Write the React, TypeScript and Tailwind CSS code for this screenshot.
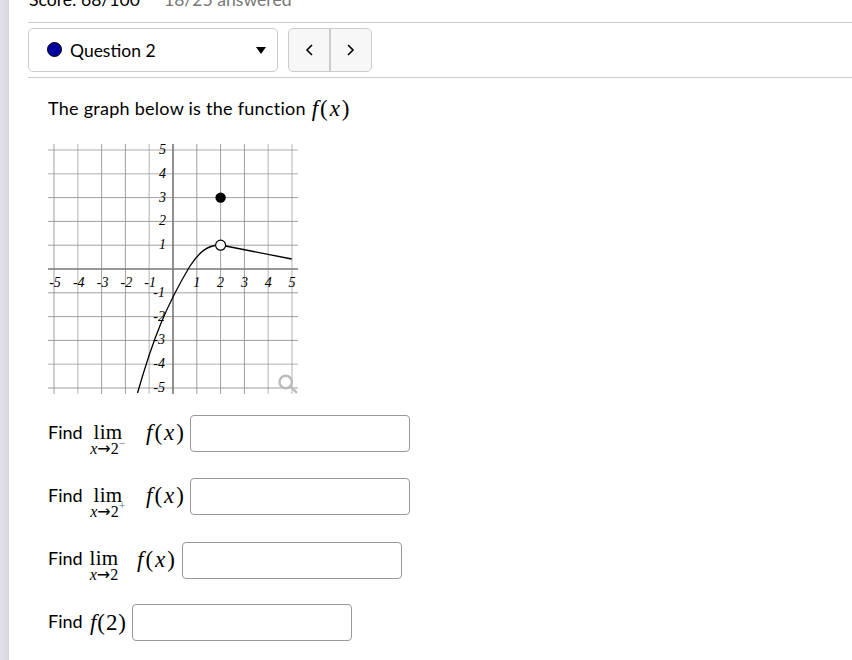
const X = (k: number) => 125 + 23.8 * k
const Y = (k: number) => 125 - 23.8 * k
const ticks = [-5, -4, -3, -2, -1, 1, 2, 3, 4, 5]
const strongV = [-4, 4, 5, -1]
const strongH = [4, -4, 5]

const Graph = () => (
    <svg width="250" height="250" viewBox="0 0 250 250" className="block">
        {ticks.map((k) => (
            <g key={k}>
                <line x1={X(k)} y1="0" x2={X(k)} y2="250" stroke="#888" strokeOpacity={strongV.includes(k) ? 0.45 : 0.8} strokeWidth={strongV.includes(k) ? 1.4 : 1} />
                <line x1="0" y1={Y(k)} x2="250" y2={Y(k)} stroke="#888" strokeOpacity={strongH.includes(k) ? 0.45 : 0.8} strokeWidth={strongH.includes(k) ? 1.4 : 1} />
            </g>
        ))}
        <line x1="125" y1="0" x2="125" y2="250" stroke="#777" strokeWidth="1.6" />
        <line x1="0" y1="125" x2="250" y2="125" stroke="#777" strokeWidth="1.6" />
        <g fontFamily="'Liberation Serif', serif" fontStyle="italic" fontSize="14" fill="#000">
            {ticks.map((k) => (
                <text key={k} x={k < 0 ? X(k) + 1 : X(k)} y="143" textAnchor="middle">{k}</text>
            ))}
            {ticks.map((k) => (
                <text key={k} x={k > 0 ? 118 : 117} y={Y(k) + 4} textAnchor="end">{k}</text>
            ))}
        </g>
        <path d="M89.5 249 C105 195 118 162 142 122 C152 107 160 101 172.5 101 L243.7 115" fill="none" stroke="#000" strokeWidth="1.3" />
        <circle cx="172.6" cy="53.6" r="5.2" fill="#000" />
        <circle cx="172.6" cy="101.2" r="5" fill="#fff" stroke="#000" strokeWidth="1.2" />
        <g fill="none" stroke="#bbb" strokeWidth="2.4">
            <circle cx="237.7" cy="238" r="6.2" />
            <line x1="242.5" y1="242.5" x2="249" y2="249" />
        </g>
    </svg>
)

const Fx = () => (
    <span className="inline-flex w-[38px] justify-between font-['Liberation_Serif'] text-[23px] leading-none">
        <i>f</i><span>(</span><i>x</i><span>)</span>
    </span>
)

const Lim = ({ sub, sup }: { sub: string; sup?: string }) => (
    <span className="relative inline-flex flex-col items-center font-['Liberation_Serif'] text-black">
        <span className="text-[21px] leading-[20px] tracking-[0.4px]">lim</span>
        <span className={sup ? "relative -ml-[7px] text-[16px] leading-[14px] whitespace-nowrap" : "text-[16px] leading-[14px] whitespace-nowrap"}>
            <i>x</i><span className="font-['DejaVu_Sans'] text-[16px]">→</span>{sub}
            {sup && <span className="absolute left-full top-[-5px] text-[12px] text-gray-500 leading-none">{sup}</span>}
        </span>
    </span>
)

const Box = () => <input className="w-[220px] h-[37px] border border-[#999] rounded-[4px] bg-white" />

export default function App() {
    return (
        <div className="flex h-[660px] w-[852px] overflow-hidden bg-white text-black font-['Lato',sans-serif]">
            <div className="w-[9px] shrink-0 bg-gradient-to-r from-[#e2e2ea] to-[#d6d6e0]" />
            <div className="flex-1 pl-[19px]">
                <div className="h-[22px] -mt-[11px] flex gap-[24px] text-[17.6px] leading-[22px] pl-[1px]">
                    <span>Score: 68/100</span>
                    <span className="text-[#777]">18/25 answered</span>
                </div>
                <div className="mt-[11px] border-t border-[#ccc]" />
                <div className="flex gap-[10px] mt-[5px]">
                    <div className="w-[250px] h-[44px] border border-[#ccc] rounded-[5px] flex items-center pl-[18px] pr-[11px]">
                        <span className="w-[15px] h-[15px] -mt-[1px] rounded-full bg-[#0000a0] border border-black" />
                        <span className="ml-[8px] pt-[3px] text-[17.5px]">Question 2</span>
                        <span className="ml-auto mt-[1px] w-0 h-0 border-x-[5px] border-x-transparent border-t-[7px] border-t-black" />
                    </div>
                    <div className="w-[84px] h-[44px] border border-[#ccc] rounded-[5px] bg-[#f7f7f7] flex">
                        <button className="w-[42px] border-r-2 border-[#ccc] flex items-center justify-center">
                            <svg width="10" height="14" viewBox="0 0 10 14"><path d="M8 2 3 7l5 5" fill="none" stroke="#000" strokeWidth="1.6" /></svg>
                        </button>
                        <button className="flex-1 flex items-center justify-center">
                            <svg width="10" height="14" viewBox="0 0 10 14"><path d="M2 2l5 5-5 5" fill="none" stroke="#000" strokeWidth="1.6" /></svg>
                        </button>
                    </div>
                </div>
                <div className="mt-[5px] border-t border-[#ccc]" />
                <div className="pl-[20px]">
                    <p className="mt-[18px] h-[24px] flex items-center gap-[6px] text-[18px] tracking-[0.26px]">
                        The graph below is the function <Fx />
                    </p>
                    <div className="mt-[24px]"><Graph /></div>
                    <div className="mt-[21px] flex items-center h-[37px] text-[18px]">
                        <span className="w-[35px] -translate-y-[1px]">Find</span>
                        <span className="ml-[4px] w-[42px] flex justify-center translate-y-[5px]"><Lim sub="2" sup="−" /></span>
                        <span className="ml-[17px] mr-[6px]"><Fx /></span>
                        <Box />
                    </div>
                    <div className="mt-[26px] flex items-center h-[37px] text-[18px]">
                        <span className="w-[35px] -translate-y-[1px]">Find</span>
                        <span className="ml-[4px] w-[42px] flex justify-center translate-y-[5px]"><Lim sub="2" sup="+" /></span>
                        <span className="ml-[17px] mr-[6px]"><Fx /></span>
                        <Box />
                    </div>
                    <div className="mt-[27px] flex items-center h-[37px] text-[18px]">
                        <span className="w-[35px] -translate-y-[2px]">Find</span>
                        <span className="ml-[4px] w-[34px] flex justify-center translate-y-[4px]"><Lim sub="2" /></span>
                        <span className="ml-[16px] mr-[7px]"><Fx /></span>
                        <Box />
                    </div>
                    <div className="mt-[25px] flex items-center h-[37px] text-[18px]">
                        <span className="w-[35px] -translate-y-[1px]">Find</span>
                        <span className="ml-[7px] mr-[6px] w-[36px] inline-flex justify-between font-['Liberation_Serif'] text-[23px] leading-none">
                            <i>f</i><span>(</span><span>2</span><span>)</span>
                        </span>
                        <Box />
                    </div>
                </div>
            </div>
        </div>
    )
}
